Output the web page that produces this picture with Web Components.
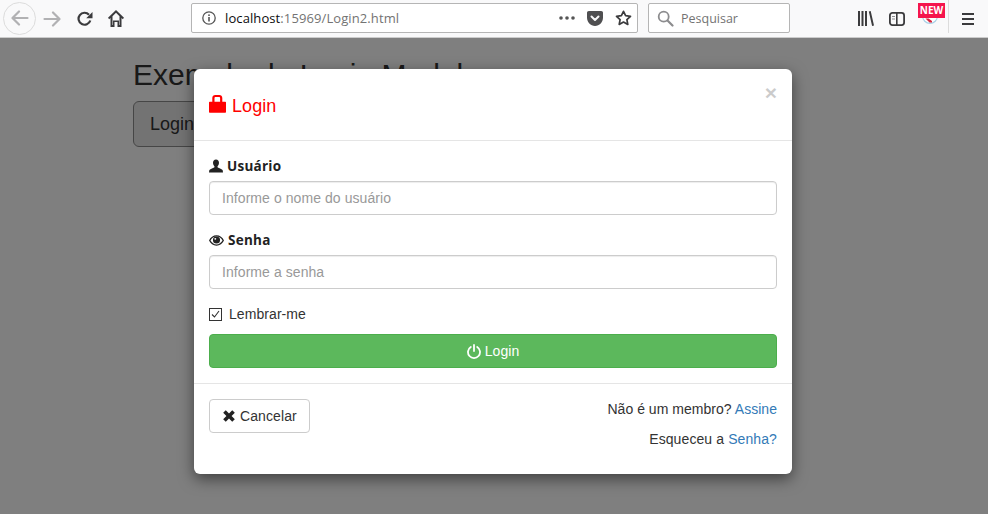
<!DOCTYPE html>
<html lang="pt">
<head>
<meta charset="utf-8">
<title>Login2</title>
<style>
  html, body { margin: 0; height: 100%; overflow: hidden; }
  body { width: 988px; height: 514px; position: relative; font-family: "Liberation Sans", Arial, sans-serif; color: #212529; background: #fff; }
</style>
</head>
<body>
  <browser-bar></browser-bar>
  <demo-page></demo-page>
  <login-modal>
    <login-field label="Usuário" icon="user" placeholder="Informe o nome do usuário"></login-field>
    <login-field label="Senha" icon="eye" placeholder="Informe a senha"></login-field>
  </login-modal>

<script>
(function() {
  const ICONS = {
    user: '<svg width="14" height="14" viewBox="0 0 15 14"><path fill="#222" d="M7.500 0C5.500 0 4.300 1.500 4.300 3.600c0 1.500.6 2.900 1.500 3.700.2.300.1.900-.2 1.200C4.300 9.300.7 10 .3 11.500L0 14h15l-.3-2.500C14.300 10 10.700 9.300 9.400 8.500c-.3-.3-.4-.9-.2-1.200.9-.8 1.500-2.200 1.500-3.700C10.700 1.500 9.500 0 7.500 0z"/></svg>',
    eye: '<svg width="15" height="13" viewBox="0 0 16 13"><path fill="#222" fill-rule="evenodd" d="M8 1C4.500 1 1.500 3.200 0 6.500 1.500 9.800 4.500 12 8 12s6.500-2.200 8-5.500C14.500 3.200 11.500 1 8 1zM8 2.300c2.700 0 5 1.700 6.400 4.200C13 9 10.700 10.700 8 10.700S3 9 1.600 6.500C3 4 5.300 2.300 8 2.300z"/><circle cx="8" cy="6" r="3.800" fill="#222"/><circle cx="6.700" cy="4.700" r="1" fill="#fff"/></svg>'
  };

  class BrowserBar extends HTMLElement {
    constructor() {
      super();
      this.attachShadow({ mode: 'open' });
      this.shadowRoot.innerHTML = `
        <style>
          :host { display: flex; align-items: center; height: 37px; background: #f9f9fa; border-bottom: 1px solid #ccc; font-family: "Open Sans", sans-serif; }
          svg { display: block; flex: none; }
          .back { width: 33px; height: 33px; margin: 0 0 1px 3px; border: 1px solid #dcdcdc; border-radius: 50%; display: flex; align-items: center; justify-content: center; flex: none; box-sizing: border-box; }
          .fwd { margin-left: 7px; }
          .reload { margin-left: 16px; }
          .home { margin-left: 15px; }
          .url { width: 447px; height: 30px; margin: 0 0 1px 67px; background: #fff; border: 1px solid #b5b5b5; border-radius: 2px; box-sizing: border-box; display: flex; align-items: center; padding-left: 10px; flex: none; }
          .url .addr { margin-left: 9px; font-size: 13px; color: #0c0c0d; white-space: nowrap; flex: 1; letter-spacing: .1px; }
          .url .addr span { color: #737373; }
          .search { width: 142px; height: 30px; margin: 0 0 1px 10px; background: #fff; border: 1px solid #b5b5b5; border-radius: 2px; box-sizing: border-box; display: flex; align-items: center; padding-left: 8px; flex: none; font-size: 12.500px; color: #737373; gap: 7px; }
          .library { margin-left: 68px; }
          .sidebar { margin-left: 15px; }
          .addon { position: relative; align-self: flex-start; width: 30px; height: 30px; margin: 3px 0 0 12px; flex: none; }
          .addon svg { position: absolute; left: 5px; top: 5px; }
          .badge { position: absolute; left: 1px; top: 0; width: 27px; height: 15px; background: #f5154d; color: #fff; font: bold 10px/14px "Open Sans", sans-serif; text-align: center; }
          .sep { align-self: flex-start; width: 1px; height: 33px; background: #dcdcdc; margin-left: 1px; flex: none; }
          .menu { margin-left: 13px; }
        </style>
        <div class="back">
          <svg width="18" height="16" viewBox="0 0 18 16"><path fill="none" stroke="#b1b1b3" stroke-width="2.200" stroke-linecap="round" stroke-linejoin="round" d="M8 1.500 1.500 8 8 14.500M2 8h14.500"/></svg>
        </div>
        <svg class="fwd" width="18" height="16" viewBox="0 0 18 16"><path fill="none" stroke="#b1b1b3" stroke-width="2.200" stroke-linecap="round" stroke-linejoin="round" d="M10 1.500 16.500 8 10 14.500M16 8H1.500"/></svg>
        <svg class="reload" width="16" height="16" viewBox="0 0 16 16"><path fill="none" stroke="#3b3b3d" stroke-width="2.200" d="M13.300 9.500A6 6 0 1 1 12 3.700"/><path fill="#3b3b3d" d="M15.500 1v6.300H9.200z"/></svg>
        <svg class="home" width="16" height="17" viewBox="0 0 16 17"><path fill="#3b3b3d" fill-rule="evenodd" d="M8 0 0 7.800l1.200 1.400L2.500 8v9h4v-5h3v5h4V8l1.300 1.200L16 7.800zM8 2.800l3.500 3.400V15h-.5v-4.500H5V15h-.5V6.200z"/></svg>
        <div class="url">
          <svg width="14" height="14" viewBox="0 0 14 14"><circle cx="7" cy="7" r="6.200" fill="none" stroke="#555" stroke-width="1.300"/><rect x="6.200" y="6" width="1.600" height="4.500" fill="#555"/><rect x="6.200" y="3.400" width="1.600" height="1.600" fill="#555"/></svg>
          <div class="addr">localhost<span>:15969/Login2.html</span></div>
          <svg width="16" height="4" viewBox="0 0 16 4" style="margin-right:12px"><circle cx="2" cy="2" r="1.800" fill="#555"/><circle cx="8" cy="2" r="1.800" fill="#555"/><circle cx="14" cy="2" r="1.800" fill="#555"/></svg>
          <svg width="16" height="15" viewBox="0 0 16 15" style="margin-right:12px"><path fill="#4f4f51" d="M1.800 0h12.400C15.200 0 16 .8 16 1.800V6.500C16 11.200 12.500 15 8 15S0 11.200 0 6.500V1.800C0 .8.800 0 1.800 0z"/><path fill="none" stroke="#f9f9fa" stroke-width="2" stroke-linecap="round" stroke-linejoin="round" d="M4.500 5.500 8 9l3.500-3.500"/></svg>
          <svg width="17" height="16" viewBox="0 0 17 16" style="margin-right:5px"><path fill="none" stroke="#3b3b3d" stroke-width="1.700" stroke-linejoin="round" d="M8.500 1.300 10.600 5.700l4.900.6-3.600 3.300.9 4.800-4.300-2.400-4.300 2.400.9-4.800L1.500 6.300l4.900-.6z"/></svg>
        </div>
        <div class="search">
          <svg width="17" height="17" viewBox="0 0 17 17"><circle cx="6.700" cy="6.700" r="5" fill="none" stroke="#8c8c8e" stroke-width="1.800"/><path stroke="#8c8c8e" stroke-width="2.200" stroke-linecap="round" d="M10.500 10.500 15.500 15.500"/></svg>
          <span>Pesquisar</span>
        </div>
        <svg class="library" width="16" height="15" viewBox="0 0 16 15"><path fill="#3b3b3d" d="M0 0h2v15H0zM3.500 0h2v15h-2zM7 0h2v15H7zM10.800.5l1.900-.5 3.300 14.500-1.900.5z"/></svg>
        <svg class="sidebar" width="16" height="14" viewBox="0 0 16 14"><rect x=".9" y=".9" width="14.200" height="12.200" rx="2.500" fill="none" stroke="#3b3b3d" stroke-width="1.800"/><rect x="7" y="1" width="1.600" height="12" fill="#3b3b3d"/><path fill="#8c8c8e" d="M3 4h3v1H3zM3 6.500h3v1H3z"/></svg>
        <div class="addon">
          <svg width="16" height="16" viewBox="0 0 16 16"><circle cx="8" cy="8" r="7.400" fill="#fff" stroke="#a7cfe6" stroke-width="1.200"/><path fill="#d7263d" d="M3.500 10.500h3L10 13v1.500H7.500z"/></svg>
          <div class="badge">NEW</div>
        </div>
        <div class="sep"></div>
        <svg class="menu" width="12" height="12" viewBox="0 0 12 12"><path fill="#3b3b3d" d="M0 0h12v2H0zM0 5h12v2H0zM0 10h12v2H0z"/></svg>
      `;
    }
  }

  class DemoPage extends HTMLElement {
    constructor() {
      super();
      this.attachShadow({ mode: 'open' });
      this.shadowRoot.innerHTML = `
        <style>
          :host { display: block; padding: 19px 0 0 133px; }
          h2 { margin: 0 0 8px; font: 500 30px/36px "Liberation Sans", Arial, sans-serif; color: #333; white-space: nowrap; }
          button { display: block; height: 46px; padding: 0 16px; white-space: nowrap; font: 18px "Liberation Sans", Arial, sans-serif; color: #333; background: #e6e6e6; border: 1px solid #8c8c8c; border-radius: 6px; }
        </style>
        <h2>Exemplo de Login Modal</h2>
        <button>Login Modal</button>
      `;
    }
  }

  class LoginField extends HTMLElement {
    constructor() {
      super();
      this.attachShadow({ mode: 'open' });
    }
    connectedCallback() {
      const icon = ICONS[this.getAttribute('icon')] || '';
      this.shadowRoot.innerHTML = `
        <style>
          :host { display: block; margin-bottom: 15px; }
          label { display: flex; align-items: center; gap: 4px; height: 20px; margin-bottom: 5px; font: bold 13.500px/20px "Open Sans", sans-serif; color: #222; letter-spacing: .25px; }
          input { display: block; box-sizing: border-box; width: 100%; height: 34px; padding: 6px 12px; font: 14px "Liberation Sans", Arial, sans-serif; letter-spacing: .07px; color: #555; background: #fff; border: 1px solid #ccc; border-radius: 4px; box-shadow: inset 0 1px 1px rgba(0,0,0,.075); outline: none; }
          input::placeholder { color: #999; opacity: 1; }
        </style>
        <label>${icon}<span>${this.getAttribute('label')}</span></label>
        <input type="text" placeholder="${this.getAttribute('placeholder')}">
      `;
    }
  }

  class LoginModal extends HTMLElement {
    constructor() {
      super();
      this.attachShadow({ mode: 'open' });
      this.shadowRoot.innerHTML = `
        <style>
          :host { display: block; position: absolute; inset: 0; top: 38px; background: rgba(0,0,0,.5); font: 14px/20px "Liberation Sans", Arial, sans-serif; color: #333; letter-spacing: .07px; }
          .dialog { position: absolute; left: 194px; top: 31px; width: 598px; height: 405px; box-sizing: border-box; background: #fff; border-radius: 6px; box-shadow: 0 5px 15px rgba(0,0,0,.5); display: flex; flex-direction: column; }
          header { height: 72px; box-sizing: border-box; border-bottom: 1px solid #e5e5e5; padding: 27px 15px 0; position: relative; }
          h4 { margin: 0; display: flex; align-items: center; gap: 6px; font: 18px/20px "Liberation Sans", Arial, sans-serif; color: #f00; }
          h4 svg { margin-top: -4px; flex: none; }
          .close { position: absolute; right: 15px; top: 13px; font: bold 21px/21px "Liberation Sans", Arial, sans-serif; color: #000; opacity: .2; }
          main { padding: 15px; height: 242px; box-sizing: border-box; }
          .remember { display: flex; align-items: center; gap: 7px; height: 20px; margin: 0 0 10px; color: #333; }
          .box { width: 13px; height: 13px; margin-top: 1px; box-sizing: border-box; border: 1px solid #333; flex: none; background: #fff; }
          .box svg { display: block; }
          .submit { display: flex; align-items: center; justify-content: center; gap: 4px; box-sizing: border-box; width: 100%; height: 34px; font: 14px "Liberation Sans", Arial, sans-serif; letter-spacing: .07px; color: #fff; background: #5cb85c; border: 1px solid #4cae4c; border-radius: 4px; padding: 0; }
          footer { border-top: 1px solid #e5e5e5; padding: 15px; display: flex; justify-content: space-between; flex: 1; }
          .cancel { display: flex; align-items: center; gap: 5px; box-sizing: border-box; width: 101px; height: 34px; padding: 0 0 0 13px; font: 14px "Liberation Sans", Arial, sans-serif; letter-spacing: .1px; color: #333; background: #fff; border: 1px solid #ccc; border-radius: 4px; white-space: nowrap; }
          .cancel svg { flex: none; }
          .links { text-align: right; }
          .links p { margin: 0 0 10px; letter-spacing: .03px; }
          .links p + p { letter-spacing: .1px; }
          a { color: #337ab7; text-decoration: none; }
        </style>
        <div class="dialog">
          <header>
            <h4>
              <svg width="17" height="18" viewBox="0 0 17 18"><path fill="#f00" fill-rule="evenodd" d="M.7 6.700H3.300V3C3.300 1.200 4.500 0 6.300 0h4c1.800 0 3 1.200 3 3v3.700h3c.4 0 .7.300.7.700V17c0 .4-.3.7-.7.700H.7C.3 17.700 0 17.400 0 17V7.400C0 7 .3 6.700.7 6.700zM5.500 6.700h5.600V3.200c0-.7-.4-1.100-1.100-1.100H6.600c-.7 0-1.100.4-1.100 1.100z"/></svg>
              <span>Login</span>
            </h4>
            <span class="close">×</span>
          </header>
          <main>
            <slot></slot>
            <div class="remember">
              <span class="box"><svg width="11" height="11" viewBox="0 0 11 11"><path fill="none" stroke="#333" stroke-width="1.100" d="M2 5.500 4.500 8 9 2"/></svg></span>
              <span>Lembrar-me</span>
            </div>
            <button class="submit">
              <svg width="14" height="15" viewBox="0 0 14 15"><path fill="none" stroke="#fff" stroke-width="1.800" stroke-linecap="round" d="M7 1v6M3.800 3A6 6 0 1 0 10.200 3"/></svg>
              <span>Login</span>
            </button>
          </main>
          <footer>
            <button class="cancel">
              <svg width="12" height="12" viewBox="0 0 13 13"><path fill="#222" d="M3 .2 6.500 3.700 10 .2 12.800 3 9.300 6.500 12.800 10 10 12.800 6.500 9.300 3 12.800.2 10 3.700 6.500.2 3z"/></svg>
              <span>Cancelar</span>
            </button>
            <div class="links">
              <p>Não é um membro? <a>Assine</a></p>
              <p>Esqueceu a <a>Senha?</a></p>
            </div>
          </footer>
        </div>
      `;
    }
  }

  customElements.define('browser-bar', BrowserBar);
  customElements.define('demo-page', DemoPage);
  customElements.define('login-field', LoginField);
  customElements.define('login-modal', LoginModal);
})();
</script>
</body>
</html>
